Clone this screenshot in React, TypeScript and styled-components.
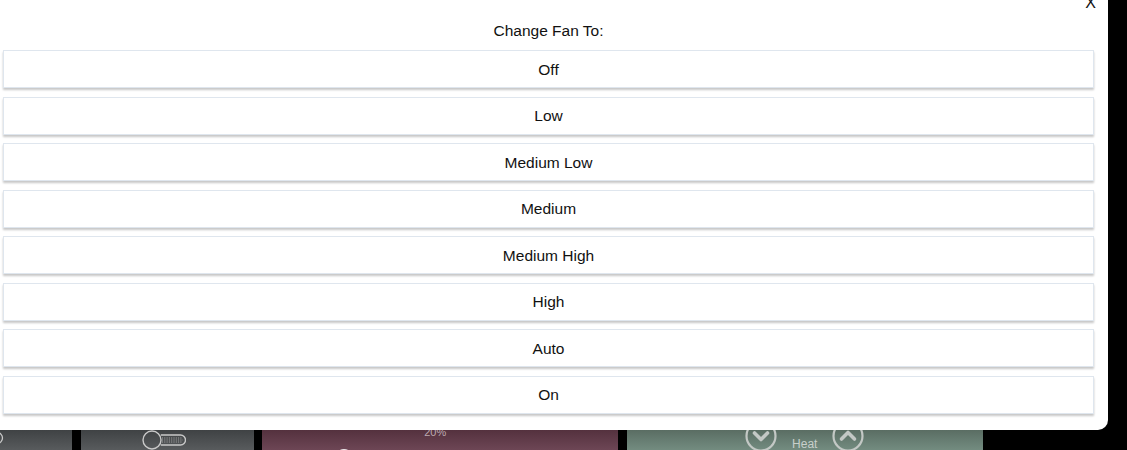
import React from 'react';
import styled, { createGlobalStyle } from 'styled-components';

const GlobalStyle = createGlobalStyle`
  html, body {
    margin: 0;
    padding: 0;
    background: #000;
    overflow: hidden;
  }
  body {
    font-family: "Liberation Sans", Arial, sans-serif;
  }
`;

type Tone = 'slate' | 'wine' | 'sage';

// tiles run from y=400 to 450, the modal hides the top 60%
const toneGradients: Record<Tone, string> = {
  slate: 'linear-gradient(to bottom, #2e3133 0%, #3f4244 60%, #585b5d 100%)',
  wine: 'linear-gradient(to bottom, #45283380 0%, #54313e 60%, #6d4655 100%)',
  sage: 'linear-gradient(to bottom, #4c5e55 0%, #5a6d63 60%, #738c80 100%)',
};

const Screen = styled.div`
  position: relative;
  width: 1127px;
  height: 450px;
  overflow: hidden;
  background: #000;
`;

const TileRow = styled.div`
  display: flex;
  gap: 8.6px;
  padding-top: 400px;
  margin-left: -101px;
`;

const Tile = styled.div<{ tone: Tone; w: number }>`
  position: relative;
  flex: none;
  width: ${({ w }) => w}px;
  height: 50px;
  background: ${({ tone }) => toneGradients[tone]};
  display: flex;
  justify-content: center;
  align-items: flex-start;
  color: #c4c4c4;
`;

const IconSlot = styled.div<{ top: number; shift?: number }>`
  margin-top: ${({ top }) => top}px;
  margin-left: ${({ shift }) => (shift && shift > 0 ? shift : 0)}px;
  margin-right: ${({ shift }) => (shift && shift < 0 ? -shift : 0)}px;
  display: flex;
  align-items: flex-start;
  gap: 7.5px;
`;

const Percent = styled.div`
  margin-top: 26px;
  margin-right: 10px;
  font-size: 11px;
  color: #bcaab0;
`;

const Knob = styled.div`
  position: absolute;
  left: 73px;
  top: 49px;
  width: 18px;
  height: 18px;
  border-radius: 50%;
  background: #ece7e9;
`;

const Reading = styled.div`
  width: 40px;
  margin-top: -4px;
  display: flex;
  flex-direction: column;
  align-items: center;
  color: #c8cfcb;
`;

const Value = styled.div`
  font-size: 18px;
  font-weight: bold;
  line-height: 16px;
  white-space: nowrap;
`;

const Mode = styled.div`
  margin-top: 5.5px;
  font-size: 12px;
  line-height: 13px;
`;

const Modal = styled.div`
  position: absolute;
  left: 0;
  top: 0;
  width: 1108px;
  height: 430px;
  box-sizing: border-box;
  background: #fff;
  border-bottom-right-radius: 10px;
  padding: 0 14px 0 3px;
`;

const Close = styled.div`
  position: absolute;
  top: -6px;
  right: 12px;
  font-size: 16px;
  line-height: 18px;
  color: #111;
`;

const Title = styled.div`
  padding-top: 21px;
  padding-bottom: 9px;
  line-height: 20px;
  text-align: center;
  font-size: 15.5px;
  color: #111;
`;

const OptionList = styled.div`
  display: flex;
  flex-direction: column;
  gap: 8.57px;
`;

const Option = styled.div`
  height: 38px;
  box-sizing: border-box;
  padding-top: 1px;
  border: 1px solid #dfe6ee;
  background: #fff;
  box-shadow: 0 2px 2px rgba(0, 0, 0, 0.22);
  display: flex;
  align-items: center;
  justify-content: center;
  font-size: 15.5px;
  color: #111;
`;

const ChevronCircle = ({ up }: { up?: boolean }) => (
  <svg width="32" height="32" viewBox="0 0 32 32" fill="none">
    <circle cx="16" cy="16" r="14.5" stroke="#c3c8c5" strokeWidth="2.2" />
    <path
      d={up ? 'M9.5 19 L16 12.5 L22.5 19' : 'M9.5 13 L16 19.5 L22.5 13'}
      stroke="#c3c8c5"
      strokeWidth="3.6"
      strokeLinecap="round"
      strokeLinejoin="round"
    />
  </svg>
);

const Thermometer = () => (
  <svg width="44" height="22" viewBox="0 0 44 22" fill="none">
    <circle cx="10" cy="11" r="9" stroke="#c9c9c9" strokeWidth="1.4" />
    <path d="M18.8 6 H38.5 A5 5 0 0 1 38.5 16 H18.8" stroke="#c9c9c9" strokeWidth="1.4" />
    <path
      d="M20 9 H40 M20 11 H41 M20 13 H40"
      stroke="#a9a9a9"
      strokeWidth="1"
      strokeDasharray="1 1.3"
    />
  </svg>
);

const SmallRing = () => (
  <svg width="14" height="14" viewBox="0 0 14 14" fill="none">
    <circle cx="7" cy="7" r="5.5" stroke="#c9c9c9" strokeWidth="1.3" />
  </svg>
);

const fanOptions = ['Off', 'Low', 'Medium Low', 'Medium', 'Medium High', 'High', 'Auto', 'On'];

export default function App() {
  return (
    <Screen>
      <GlobalStyle />
      <TileRow>
        <Tile tone="slate" w={173}>
          <IconSlot top={31} shift={23}>
            <SmallRing />
          </IconSlot>
        </Tile>
        <Tile tone="slate" w={173}>
          <IconSlot top={29} shift={-6}>
            <Thermometer />
          </IconSlot>
        </Tile>
        <Tile tone="wine" w={356}>
          <Percent>20%</Percent>
          <Knob />
        </Tile>
        <Tile tone="sage" w={356}>
          <IconSlot top={20}>
            <ChevronCircle />
            <Reading>
              <Value>22°F</Value>
              <Mode>Heat</Mode>
            </Reading>
            <ChevronCircle up />
          </IconSlot>
        </Tile>
      </TileRow>
      <Modal>
        <Close>X</Close>
        <Title>Change Fan To:</Title>
        <OptionList>
          {fanOptions.map((opt) => (
            <Option key={opt}>{opt}</Option>
          ))}
        </OptionList>
      </Modal>
    </Screen>
  );
}
